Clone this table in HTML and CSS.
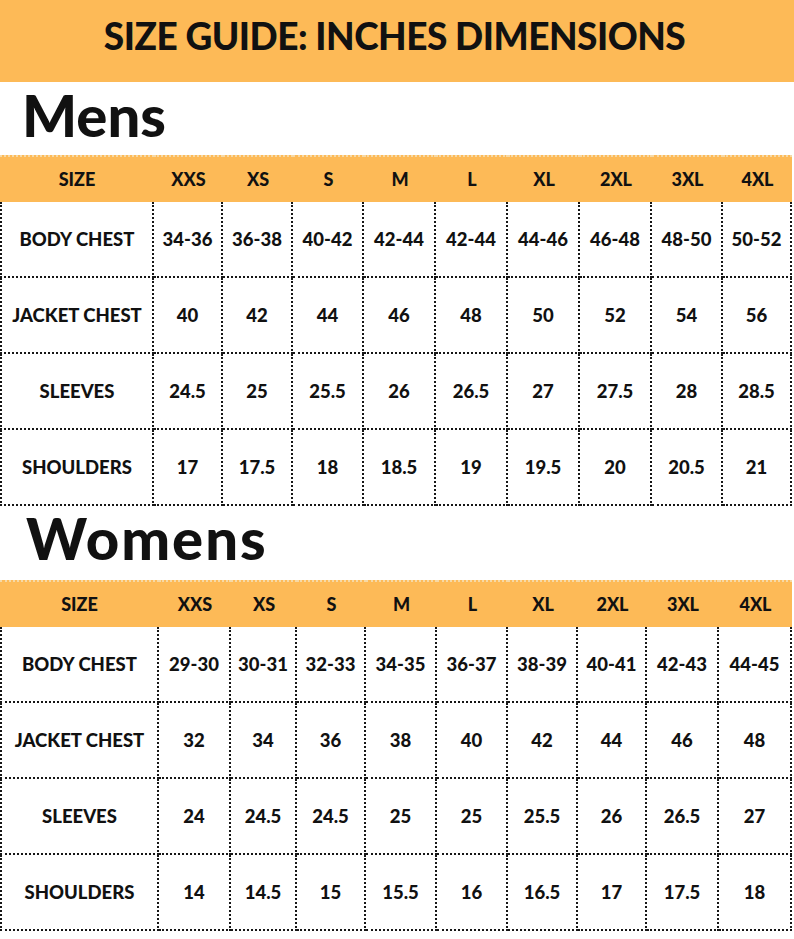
FILE: index.html
```html
<!DOCTYPE html>
<html lang="en">
<head>
<meta charset="utf-8">
<title>Size Guide</title>
<link rel="stylesheet" href="styles.css">
</head>
<body>
<header class="banner"><h1 class="banner-title">SIZE GUIDE: INCHES DIMENSIONS</h1></header>

<section class="guide guide-mens">
  <h2 class="guide-title">Mens</h2>
  <table class="size-table mens">
    <colgroup>
      <col class="c0"><col class="c1"><col class="c2"><col class="c3"><col class="c4"><col class="c5"><col class="c6"><col class="c7"><col class="c8"><col class="c9">
    </colgroup>
    <thead>
      <tr><th>SIZE</th><th>XXS</th><th>XS</th><th>S</th><th>M</th><th>L</th><th>XL</th><th>2XL</th><th>3XL</th><th>4XL</th></tr>
    </thead>
    <tbody>
      <tr><td>BODY CHEST</td><td>34-36</td><td>36-38</td><td>40-42</td><td>42-44</td><td>42-44</td><td>44-46</td><td>46-48</td><td>48-50</td><td>50-52</td></tr>
      <tr><td>JACKET CHEST</td><td>40</td><td>42</td><td>44</td><td>46</td><td>48</td><td>50</td><td>52</td><td>54</td><td>56</td></tr>
      <tr><td>SLEEVES</td><td>24.5</td><td>25</td><td>25.5</td><td>26</td><td>26.5</td><td>27</td><td>27.5</td><td>28</td><td>28.5</td></tr>
      <tr><td>SHOULDERS</td><td>17</td><td>17.5</td><td>18</td><td>18.5</td><td>19</td><td>19.5</td><td>20</td><td>20.5</td><td>21</td></tr>
    </tbody>
  </table>
</section>

<section class="guide guide-womens">
  <h2 class="guide-title">Womens</h2>
  <table class="size-table womens">
    <colgroup>
      <col class="c0"><col class="c1"><col class="c2"><col class="c3"><col class="c4"><col class="c5"><col class="c6"><col class="c7"><col class="c8"><col class="c9">
    </colgroup>
    <thead>
      <tr><th>SIZE</th><th>XXS</th><th>XS</th><th>S</th><th>M</th><th>L</th><th>XL</th><th>2XL</th><th>3XL</th><th>4XL</th></tr>
    </thead>
    <tbody>
      <tr><td>BODY CHEST</td><td>29-30</td><td>30-31</td><td>32-33</td><td>34-35</td><td>36-37</td><td>38-39</td><td>40-41</td><td>42-43</td><td>44-45</td></tr>
      <tr><td>JACKET CHEST</td><td>32</td><td>34</td><td>36</td><td>38</td><td>40</td><td>42</td><td>44</td><td>46</td><td>48</td></tr>
      <tr><td>SLEEVES</td><td>24</td><td>24.5</td><td>24.5</td><td>25</td><td>25</td><td>25.5</td><td>26</td><td>26.5</td><td>27</td></tr>
      <tr><td>SHOULDERS</td><td>14</td><td>14.5</td><td>15</td><td>15.5</td><td>16</td><td>16.5</td><td>17</td><td>17.5</td><td>18</td></tr>
    </tbody>
  </table>
</section>
</body>
</html>
```

FILE: styles.css
```css
html, body {
  margin: 0;
  padding: 0;
  background: #ffffff;
}

body {
  width: 794px;
  font-family: "Lato", "Open Sans", sans-serif;
  color: #111111;
}

.banner {
  height: 82px;
  background: #fdba57;
  display: flex;
  align-items: center;
  justify-content: center;
  box-sizing: border-box;
  padding-bottom: 11px;
  padding-right: 5px;
}

.banner-title {
  margin: 0;
  font-size: 37px;
  font-weight: 900;
  letter-spacing: -0.5px;
  line-height: 1;
}

.guide-title {
  margin: 0;
  font-weight: 900;
  line-height: 1;
  box-sizing: border-box;
}

.guide-mens .guide-title {
  height: 73px;
  font-size: 58px;
  padding-left: 22px;
  padding-top: 4px;
}

.guide-womens .guide-title {
  height: 74px;
  font-size: 58px;
  padding-left: 26px;
  padding-top: 3px;
  letter-spacing: 2px;
}

.size-table {
  border-collapse: separate;
  border-spacing: 0;
  table-layout: fixed;
  width: 792px;
}

.size-table th,
.size-table td {
  padding: 0;
  text-align: center;
  vertical-align: middle;
  font-weight: 900;
  font-size: 18.5px;
  white-space: nowrap;
}

.size-table th {
  background: #fdba57;
  height: 47px;
  border-top: 2px dotted #f6d9a6;
  box-sizing: border-box;
  font-size: 18px;
  padding-bottom: 2px;
}

.size-table td {
  height: 76px;
  box-sizing: border-box;
  border-right: 2px dotted #161616;
  border-bottom: 2px dotted #161616;
}

.size-table td:first-child {
  border-left: 2px dotted #161616;
}

.mens .c0 { width: 154px; }
.mens .c1 { width: 69px; }
.mens .c2 { width: 70px; }
.mens .c3 { width: 71px; }
.mens .c4 { width: 72px; }
.mens .c5 { width: 72px; }
.mens .c6 { width: 72px; }
.mens .c7 { width: 72px; }
.mens .c8 { width: 71px; }
.mens .c9 { width: 69px; }

.womens .c0 { width: 159px; }
.womens .c1 { width: 72px; }
.womens .c2 { width: 66px; }
.womens .c3 { width: 69px; }
.womens .c4 { width: 71px; }
.womens .c5 { width: 71px; }
.womens .c6 { width: 70px; }
.womens .c7 { width: 69px; }
.womens .c8 { width: 72px; }
.womens .c9 { width: 73px; }
```
